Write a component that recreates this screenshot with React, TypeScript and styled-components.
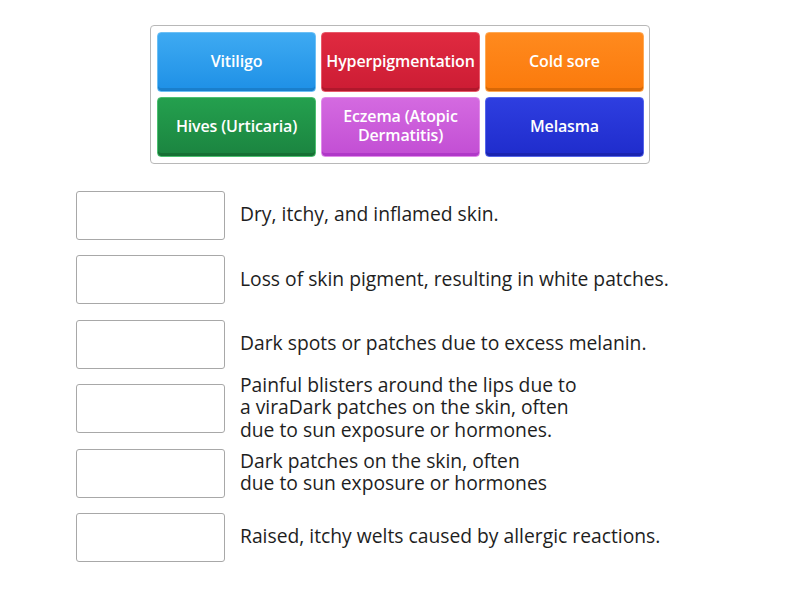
import React from "react";
import styled, { createGlobalStyle } from "styled-components";

const Global = createGlobalStyle`
  html, body { margin: 0; padding: 0; background: #fff; }
  body { font-family: "Open Sans", "Noto Sans", sans-serif; }
`;

const Page = styled.div`
  width: 800px;
  height: 600px;
  display: flex;
  flex-direction: column;
  align-items: center;
  padding-top: 25px;
  box-sizing: border-box;
`;

const Bank = styled.div`
  width: 500px;
  box-sizing: border-box;
  border: 1px solid #b8b8b8;
  border-radius: 4px;
  padding: 6px 7px 6px 6px;
  display: grid;
  grid-template-columns: repeat(3, 159px);
  grid-auto-rows: 60px;
  column-gap: 5px;
  row-gap: 5px;
`;

const Tile = styled.div<{ $top: string; $bottom: string; $edge: string; $rim: string }>`
  box-sizing: border-box;
  border-radius: 4px;
  border: 1px solid ${(p) => p.$rim};
  background: linear-gradient(${(p) => p.$top}, ${(p) => p.$bottom});
  box-shadow: inset 0 -3px 0 ${(p) => p.$edge};
  color: #fff;
  font-weight: 600;
  font-size: 16px;
  line-height: 19px;
  display: flex;
  align-items: center;
  justify-content: center;
  text-align: center;
  padding: 0 3px 2px;
  letter-spacing: -0.15px;
`;

const TileText = styled.span`
  white-space: pre-line;
`;

const List = styled.div`
  width: 800px;
  padding-left: 76px;
  padding-top: 27px;
  box-sizing: border-box;
  display: flex;
  flex-direction: column;
  gap: 15.4px;
`;

const Row = styled.div`
  height: 49px;
  display: flex;
  align-items: center;
  gap: 15px;
`;

const Slot = styled.div`
  width: 149px;
  height: 49px;
  box-sizing: border-box;
  border: 1px solid #a8a8a8;
  border-radius: 3px;
  background: #fff;
  flex-shrink: 0;
`;

const Clue = styled.div`
  font-size: 19.3px;
  line-height: 22.5px;
  color: #1e1e1e;
  white-space: pre-line;
  letter-spacing: 0px;
  margin-top: -2px;
`;

const tiles = [
  { t: "Vitiligo", top: "#3eaaf2", bottom: "#1e90e6", edge: "#1a7fcc", rim: "#6cc0f5" },
  { t: "Hyperpigmentation", top: "#e02a40", bottom: "#cc1c34", edge: "#b0182c", rim: "#e85a6a" },
  { t: "Cold sore", top: "#ff8a1e", bottom: "#fb7a0c", edge: "#d86806", rim: "#ffaa55" },
  { t: "Hives (Urticaria)", top: "#24a04e", bottom: "#1b8440", edge: "#167034", rim: "#4cc070" },
  { t: "Eczema (Atopic\nDermatitis)", top: "#d46ae0", bottom: "#c24ed4", edge: "#b038c8", rim: "#e08aea" },
  { t: "Melasma", top: "#2e3ee0", bottom: "#1f2ccc", edge: "#1a24b0", rim: "#5566ea" },
];

const clues = [
  "Dry, itchy, and inflamed skin.",
  "Loss of skin pigment, resulting in white patches.",
  "Dark spots or patches due to excess melanin.",
  "Painful blisters around the lips due to\na viraDark patches on the skin, often\ndue to sun exposure or hormones.",
  "Dark patches on the skin, often\ndue to sun exposure or hormones",
  "Raised, itchy welts caused by allergic reactions.",
];

export default function App() {
  return (
    <>
      <Global />
      <Page>
        <Bank>
          {tiles.map((x) => (
            <Tile key={x.t} $top={x.top} $bottom={x.bottom} $edge={x.edge} $rim={x.rim}>
              <TileText>{x.t}</TileText>
            </Tile>
          ))}
        </Bank>
        <List>
          {clues.map((c) => (
            <Row key={c}>
              <Slot />
              <Clue>{c}</Clue>
            </Row>
          ))}
        </List>
      </Page>
    </>
  );
}
